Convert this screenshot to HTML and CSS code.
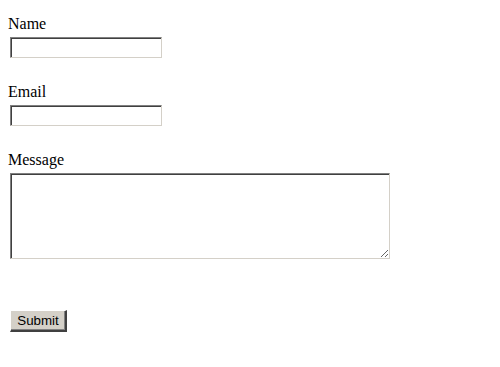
FILE: index.html
```html
<!DOCTYPE html>
<html>
<head>
<meta charset="utf-8">
<link rel="stylesheet" href="styles.css">
</head>
<body>
<form class="contact">
  <div class="field">
    <label class="label" for="name">Name</label>
    <input class="box input" id="name" type="text">
  </div>
  <div class="field">
    <label class="label" for="email">Email</label>
    <input class="box input" id="email" type="text">
  </div>
  <div class="field">
    <label class="label" for="message">Message</label>
    <textarea class="box textarea" id="message"></textarea>
  </div>
  <div class="actions">
    <button class="submit" type="button">Submit</button>
  </div>
</form>
</body>
</html>
```

FILE: styles.css
```css
html, body {
  background: #ffffff;
}
body {
  margin: 8px;
  font-family: "Liberation Serif", "Times New Roman", serif;
  font-size: 16px;
  color: #000000;
}
.contact {
  display: flex;
  flex-direction: column;
  padding-top: 6px;
}
.field {
  display: flex;
  flex-direction: column;
  align-items: flex-start;
  margin-bottom: 24px;
}
.label {
  display: block;
  line-height: 20px;
  height: 20px;
  margin-bottom: 3px;
}
.box {
  box-sizing: border-box;
  margin: 0 0 0 2px;
  background: #ffffff;
  border-style: solid;
  border-width: 1px;
  border-color: #808080 #d4d0c8 #d4d0c8 #808080;
  box-shadow: inset 1px 1px 0 #404040;
  outline: none;
  padding: 1px 2px;
  font-family: "Liberation Sans", Arial, sans-serif;
  font-size: 13px;
}
.input {
  width: 152px;
  height: 21px;
}
.textarea {
  width: 380px;
  height: 86px;
  resize: both;
}
.actions {
  display: flex;
  padding-top: 27px;
}
.submit {
  box-sizing: border-box;
  margin: 0 0 0 2px;
  width: 57px;
  height: 22px;
  padding: 0;
  background: #d4d0c8;
  border-style: solid;
  border-width: 1px 2px 2px 1px;
  border-color: #ffffff #404040 #404040 #ffffff;
  box-shadow: inset -1px -1px 0 #808080;
  font-family: "Liberation Sans", Arial, sans-serif;
  font-size: 13.33px;
  color: #000000;
  line-height: 18px;
}
```
